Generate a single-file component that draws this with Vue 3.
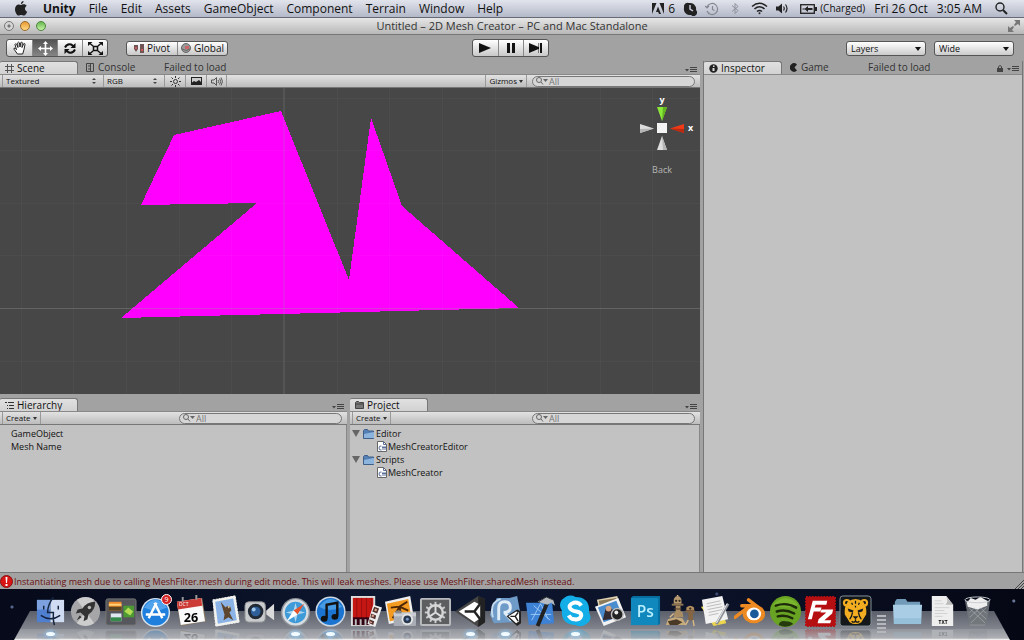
<script setup>
import { ref } from 'vue'

const menus = ['File', 'Edit', 'Assets', 'GameObject', 'Component', 'Terrain', 'Window', 'Help']
const objects = ['GameObject', 'Mesh Name']
const folders = [
  { name: 'Editor', files: ['MeshCreatorEditor'] },
  { name: 'Scripts', files: ['MeshCreator'] }
]

const gridX = [21, 73, 126, 179, 231, 337, 389, 442, 495, 547, 600, 652]
const gridY = [98, 150, 203, 255, 361]
const teeth = [0, 30, 60, 90, 120, 150, 180, 210, 240, 270, 300, 330]

const sceneSearch = ref('')
const hierarchySearch = ref('')
const projectSearch = ref('')
</script>

<template>
  <div class="desktop">
    <header class="menubar">
      <nav class="menus">
        <button class="menu apple" aria-label="Apple">
          <svg width="14" height="15" viewBox="0 0 14 15">
            <path fill="#222" d="M9.6 0c.1 1.500-1.200 3-2.700 3C6.700 1.600 8.100.2 9.600 0zM7 3.900c.8 0 1.600-.7 2.900-.7 1.100 0 2.200.6 2.800 1.500-2.500 1.500-2.100 4.900.5 6-.6 1.600-1.900 3.800-3.300 3.800-1.100 0-1.400-.6-2.700-.6s-1.700.6-2.700.6C2.900 14.500 1 11.200 1 8.200c0-3 1.900-4.800 3.700-4.800 1 0 1.700.5 2.300.5z" />
          </svg>
        </button>
        <button class="menu strong">Unity</button>
        <button v-for="menu in menus" :key="menu" class="menu">{{ menu }}</button>
      </nav>
      <div class="extras">
        <svg width="12" height="11" viewBox="0 0 12 11"><path fill="#222" d="M0 0h4.500L0 11zM7.500 0H12v11zM6 3.500 9 11H7L6.200 9H4z" /></svg>
        <span class="six">6</span>
        <svg class="gap-m" width="14" height="14" viewBox="0 0 14 14"><path fill="#222" d="M1 4a3.500 3.500 0 0 1 5-3 6 6 0 0 1 7 7 3.500 3.500 0 0 1-5 5A6 6 0 0 1 1 6z" /><path d="M7 3v4l3 2" fill="none" stroke="#ccd" stroke-width="1.500" /></svg>
        <svg class="gap-m" width="14" height="14" viewBox="0 0 14 14" fill="none" stroke="#85878f" stroke-width="1.200"><path d="M2 5a5.500 5.500 0 1 1 0 4M0 4l2 2 2-2M7.500 4v3.500l2 1" /></svg>
        <svg class="gap-l" width="8" height="13" viewBox="0 0 8 13" fill="none" stroke="#8d9099"><path d="m1 3.500 6 5-3 3v-10l3 3-6 5" /></svg>
        <svg class="gap-l" width="17" height="13" viewBox="0 0 17 13" fill="none" stroke="#222" stroke-width="1.600"><path d="M1 4.500q7.500-6.500 15 0M3.500 7q5-4.500 10 0M6 9.500q2.500-2 5 0" /><circle cx="8.500" cy="11.300" r="1" fill="#222" stroke="none" /></svg>
        <svg class="gap-m" width="12" height="11" viewBox="0 0 12 11"><path fill="#222" d="M0 3.500h2.500L6 .5v10L2.500 7.500H0z" /><path d="M7.500 3.500q1.500 2 0 4M9.500 1.500q3 4 0 8" fill="none" stroke="#222" stroke-width="1.200" /></svg>
        <svg class="gap-l" width="17" height="10" viewBox="0 0 17 10"><rect x=".7" y=".7" width="13.600" height="8.600" fill="none" stroke="#222" stroke-width="1.300" /><path fill="#222" d="M15 3h2v4h-2zM2.500 4.500H5l3-2.500v2h4.500v2H8v2L5 5.500H2.500z" /></svg>
        <span class="charged">(Charged)</span>
        <span class="clock">Fri 26 Oct</span>
        <span class="clock">3:05 AM</span>
        <button class="menu spotlight" aria-label="Spotlight">
          <svg width="13" height="13" viewBox="0 0 13 13" fill="none" stroke="#222"><circle cx="5" cy="5" r="4" stroke-width="1.400" /><path d="m8 8 4 4" stroke-width="2" /></svg>
        </button>
      </div>
    </header>

    <div class="window">
      <div class="titlebar">
        <div class="lights">
          <button class="light close" aria-label="Close"></button>
          <button class="light minimise" aria-label="Minimise"></button>
          <button class="light zoom" aria-label="Zoom"></button>
        </div>
        <h1>Untitled – 2D Mesh Creator – PC and Mac Standalone</h1>
        <button class="fullscreen" aria-label="Full screen">
          <svg width="12" height="12" viewBox="0 0 12 12"><path fill="#777" d="M6 0h6v6l-2-2-3 2-1-1 2-3zM0 6l2 2 3-2 1 1-2 3 2 2H0z" /></svg>
        </button>
      </div>

      <div class="toolbar">
        <div class="tools">
          <div class="group">
            <button class="tool" aria-label="Hand">
              <svg width="14" height="14" viewBox="0 0 14 14"><path d="M4.500 13 1 8.200q-.5-1.400 1-1l1.500 1.500L2 3.500q.4-1.400 1.600-.3L5 6.500 4.700 1.800q1-1.400 1.700 0L7 6l.8-4.500q1.200-1 1.500.4L9 6.500l1.700-3.800q1.400-.6 1.300.8L11 8.500 9.700 13z" fill="#fff" stroke="#222" /></svg>
            </button>
            <button class="tool selected" aria-label="Move">
              <svg width="15" height="15" viewBox="0 0 15 15"><path fill="#fff" d="M7.500 0 10 3H8.300v3.700H12V5l3 2.500L12 10V8.300H8.300V12H10l-2.500 3L5 12h1.700V8.300H3V10L0 7.500 3 5v1.700h3.700V3H5z" /></svg>
            </button>
            <button class="tool" aria-label="Rotate">
              <svg width="14" height="13" viewBox="0 0 14 13"><path d="M2 5.500Q4 1.500 8 2.500l2.500 1.700M12 7.500q-2 4-6 3L3.500 8.800" fill="none" stroke="#111" stroke-width="2" /><path fill="#111" d="M12.500 1v5h-5zM1.500 12V7h5z" /></svg>
            </button>
            <button class="tool" aria-label="Scale">
              <svg width="15" height="13" viewBox="0 0 15 13"><path d="M5.500 4.500h4v4h-4zM2 1.500 5 4m5 5 3 2.500m0-10L10 4M5 9l-3 2.500" fill="none" stroke="#111" stroke-width="1.500" /><path fill="#111" d="M0 0h4.500L0 4zM15 0v4L10.500 0zM0 13V9l4.500 4zM15 13h-4.500L15 9z" /></svg>
            </button>
          </div>
          <div class="group">
            <button class="mode"><svg width="10" height="9" viewBox="0 0 10 9"><path fill="#6f5555" d="M0 1h4v4L2 8 0 5zM6 0h4v9H6z" /><path fill="#c55" d="M1 3h2v2H1zM7 5h2v2H7z" /></svg>Pivot</button>
            <button class="mode"><svg width="10" height="10" viewBox="0 0 10 10"><circle cx="5" cy="5" r="4.500" fill="#999" stroke="#666" /><path fill="#c66" d="M4 3h4v3H4z" /><path d="M1 6q4 3 8 0" fill="none" stroke="#666" /></svg>Global</button>
          </div>
        </div>
        <div class="group">
          <button class="tool" aria-label="Play"><svg width="12" height="12" viewBox="0 0 12 12"><path fill="#111" d="M0 1v10l12-5z" /></svg></button>
          <button class="tool" aria-label="Pause"><svg width="10" height="12" viewBox="0 0 10 12"><path fill="#111" d="M1 1h3v10H1zM6 1h3v10H6z" /></svg></button>
          <button class="tool" aria-label="Step"><svg width="13" height="12" viewBox="0 0 13 12"><path fill="#111" d="M0 1v10l9.500-4v4H13V1H9.500v4z" /><path stroke="#ddd" d="M10.500 1v10" /></svg></button>
        </div>
        <div class="dropdowns">
          <span class="pick"><select class="popup" aria-label="Layers"><option>Layers</option></select></span>
          <span class="pick"><select class="popup" aria-label="Layout"><option>Wide</option></select></span>
        </div>
      </div>

      <main class="workspace">
        <div class="left">
          <section class="panel scene">
            <div class="tabs">
              <button class="tab active"><svg width="9" height="9" viewBox="0 0 9 9"><path d="M2.500 0v9M6.500 0v9M0 2.500h9M0 6.500h9" stroke="#555" /></svg>Scene</button>
              <button class="tab"><svg width="9" height="9" viewBox="0 0 9 9"><path d="M.5.5h7v8h-7zM2 3h3M2 6h3M4.500 1v7" fill="none" stroke="#444" /></svg>Console</button>
              <button class="tab">Failed to load</button>
              <button class="options" aria-label="Scene options"><svg width="12" height="6" viewBox="0 0 12 6"><path fill="#444" d="M0 2h4L2 4.500zM5 0h7v1H5zM5 2h7v1H5zM5 4h7v1H5z" /></svg></button>
            </div>
            <div class="strip">
              <span class="pick stepper"><select class="flat wide" aria-label="Draw mode"><option>Textured</option></select></span>
              <span class="pick stepper"><select class="flat" aria-label="Render mode"><option>RGB</option></select></span>
              <button class="toggle" aria-label="Lighting"><svg width="11" height="11" viewBox="0 0 11 11" fill="none" stroke="#333"><circle cx="5.500" cy="5.500" r="2" /><path d="M5.500 0v2M5.500 9v2M0 5.500h2M9 5.500h2M1.500 1.500 3 3m5 5 1.500 1.500m0-8L8 3M3 8 1.500 9.500" /></svg></button>
              <button class="toggle" aria-label="Overlays"><svg width="11" height="8" viewBox="0 0 11 8"><path fill="#222" d="M0 0h11v8H0z" /><path fill="#ccc" d="M1 5.500 3 4l2 1 3-2 2 2V1H1z" /></svg></button>
              <button class="toggle last" aria-label="Audio"><svg width="12" height="9" viewBox="0 0 12 9" fill="none" stroke="#555"><path d="M.5 3H3l2.500-2.500v8L3 6H.5zM7 3q1.500 1.500 0 3M8.500 1.500q2.500 3 0 6M10 .5q3 4 0 8" /></svg></button>
              <span class="spacer"></span>
              <button class="create gizmos">Gizmos <i class="caret"></i></button>
              <label class="search">
                <svg width="12" height="8" viewBox="0 0 12 8"><circle cx="3" cy="3" r="2.500" fill="none" stroke="#666" /><path d="m5 5 2 2.500" stroke="#666" /><path fill="#666" d="M7 2h5L9.500 5z" /></svg>
                <input v-model="sceneSearch" type="text" placeholder="All" aria-label="Search scene">
              </label>
            </div>
            <div class="viewport">
              <svg class="canvas" viewBox="0 88 700 306" preserveAspectRatio="xMidYMid slice">
                <polygon points="174,135 281,111 349,280 371,118 402,206 519,308 121,318 257,203 141,205" fill="#f0f" shape-rendering="crispEdges" />
                <g stroke="#fff" stroke-opacity=".03">
                  <path v-for="x in gridX" :key="'x' + x" :d="`M${x}.5 88v306`" />
                  <path v-for="y in gridY" :key="'y' + y" :d="`M0 ${y}.5h700`" />
                </g>
                <path d="M284 88v306M0 308.500h700" stroke="#999" stroke-opacity=".35" />
              </svg>
              <div class="gizmo">
                <span class="axis">y</span>
                <svg width="44" height="46" viewBox="0 0 44 46">
                  <path fill="#8be83a" d="M17 1h10l-5 14z" /><path fill="#62b51e" d="M23 1h4l-5 14z" />
                  <path fill="#ddd" d="M0 18v9l14-4.500z" /><path fill="#b5b5b5" d="M0 23v4l14-4.500z" />
                  <path fill="#f03a18" d="M44 18v9l-14-4.500z" /><path fill="#b92a10" d="M44 23v4l-14-4.500z" />
                  <path fill="#ddd" d="M17 44h10l-5-14z" /><path fill="#b5b5b5" d="M23 44h4l-5-14z" />
                  <path fill="#f4f4f4" d="M17 17h10v10H17z" />
                </svg>
                <span class="axis axis-x">x</span>
                <span class="view">Back</span>
              </div>
            </div>
          </section>

          <div class="bottom">
            <section class="panel">
              <div class="tabs">
                <button class="tab active"><svg width="9" height="9" viewBox="0 0 9 9"><path d="M0 1.500h2M3 1.500h6M2 4.500h1M4 4.500h5M2 7.500h1M4 7.500h5" stroke="#333" /></svg>Hierarchy</button>
                <button class="options" aria-label="Hierarchy options"><svg width="12" height="6" viewBox="0 0 12 6"><path fill="#444" d="M0 2h4L2 4.500zM5 0h7v1H5zM5 2h7v1H5zM5 4h7v1H5z" /></svg></button>
              </div>
              <div class="strip">
                <button class="create">Create <i class="caret"></i></button>
                <span class="spacer"></span>
                <label class="search">
                  <svg width="12" height="8" viewBox="0 0 12 8"><circle cx="3" cy="3" r="2.500" fill="none" stroke="#666" /><path d="m5 5 2 2.500" stroke="#666" /><path fill="#666" d="M7 2h5L9.500 5z" /></svg>
                  <input v-model="hierarchySearch" type="text" placeholder="All" aria-label="Search hierarchy">
                </label>
              </div>
              <ul class="list objects">
                <li v-for="object in objects" :key="object">{{ object }}</li>
              </ul>
            </section>

            <section class="panel">
              <div class="tabs">
                <button class="tab active"><svg width="9" height="8" viewBox="0 0 9 8"><path d="M.5 7.500v-6l1-1h2l1 1h4v6zM.5 3h8" fill="#777" stroke="#444" /></svg>Project</button>
                <button class="options" aria-label="Project options"><svg width="12" height="6" viewBox="0 0 12 6"><path fill="#444" d="M0 2h4L2 4.500zM5 0h7v1H5zM5 2h7v1H5zM5 4h7v1H5z" /></svg></button>
              </div>
              <div class="strip">
                <button class="create">Create <i class="caret"></i></button>
                <span class="spacer"></span>
                <label class="search">
                  <svg width="12" height="8" viewBox="0 0 12 8"><circle cx="3" cy="3" r="2.500" fill="none" stroke="#666" /><path d="m5 5 2 2.500" stroke="#666" /><path fill="#666" d="M7 2h5L9.500 5z" /></svg>
                  <input v-model="projectSearch" type="text" placeholder="All" aria-label="Search project">
                </label>
              </div>
              <ul class="list">
                <template v-for="folder in folders" :key="folder.name">
                  <li>
                    <svg class="arrow" width="8" height="7" viewBox="0 0 8 7"><path fill="#666" d="M0 0h8L4 7z" /></svg>
                    <svg width="12" height="10" viewBox="0 0 12 10"><path d="M.5 9.500v-8l1-1h3l1 1.500h5v7.500z" fill="#5580b5" stroke="#3f5f88" /><path d="M1 9V5l10-2v6z" fill="#8db4dd" /></svg>
                    {{ folder.name }}
                  </li>
                  <li v-for="file in folder.files" :key="file" class="file">
                    <svg width="10" height="11" viewBox="0 0 10 11"><path d="M.5.5h6l3 3v7h-9z" fill="#fff" stroke="#666" /><path d="M6.500.5v3h3M4.500 5q-2.500-.5-2.500 2t2.500 2M6 5v4M8 5v4M5 6.500h4" fill="none" stroke="#5a6f9a" /></svg>
                    {{ file }}
                  </li>
                </template>
              </ul>
            </section>
          </div>
        </div>

        <section class="panel inspector">
          <div class="tabs">
            <button class="tab active"><svg width="9" height="9" viewBox="0 0 9 9"><circle cx="4.500" cy="4.500" r="4.200" fill="#222" /><path fill="#ddd" d="M4 1.500h1.500V3H4zM3.500 4h2v3h-2z" /></svg>Inspector</button>
            <button class="tab"><svg width="8" height="9" viewBox="0 0 8 9"><path fill="#222" d="M7 1.500 4.500 4.500 7 7.500A4.200 4.200 0 1 1 7 1.500z" /></svg>Game</button>
            <button class="tab">Failed to load</button>
            <button class="options" aria-label="Inspector options"><svg width="22" height="9" viewBox="0 0 22 9"><path fill="#444" d="M0 4h6v4H0zM10 4h4l-2 2.500zM15 2h7v1h-7zM15 4h7v1h-7zM15 6h7v1h-7z" /><path d="M1.500 4V2.500q1.500-2 3 0V4" fill="none" stroke="#444" /></svg></button>
          </div>
          <div class="blank"></div>
        </section>
      </main>

      <footer class="status">
        <svg width="13" height="13" viewBox="0 0 13 13"><circle cx="6.500" cy="6.500" r="6" fill="#d91515" stroke="#8c1010" /><path fill="#fff" d="M5.500 2h2L7 8H6zM5.500 9h2v2h-2z" /></svg>
        <span>Instantiating mesh due to calling MeshFilter.mesh during edit mode. This will leak meshes. Please use MeshFilter.sharedMesh instead.</span>
        <svg class="grip" width="10" height="10" viewBox="0 0 10 10"><path d="m1 10 9-9M4 10l6-6M7 10l3-3" stroke="#444" /></svg>
      </footer>
    </div>

    <nav class="dock">
      <button class="app running" aria-label="Finder">
        <svg viewBox="0 0 34 34"><path fill="#4f7fd0" d="M3 5h14v23H3z" /><path fill="#a9c4ec" d="M3 5h14v10H3z" opacity=".5" /><path fill="#cfdcf2" d="M17 5h14v23H17z" /><path d="M20 2q-6 8-6 16h6q-.5 8 1 13M7 21q10 7 20 0M10 11v4M25 11v4" fill="none" stroke="#15243f" stroke-width="1.500" /></svg>
      </button>
      <button class="app" aria-label="Launchpad">
        <svg viewBox="0 0 34 34"><circle cx="17" cy="17" r="15" fill="#a6a6a8" /><path fill="#dedede" d="M17 17 8 5q9-6 18 0zM17 17l-9 12q9 6 18 0z" opacity=".7" /><path fill="#333" d="M27 7q-9 0-13 7l-5 1-2 4 5-1 4 4-1 5 4-2 1-5q7-4 7-13zM11 21l2 2-5 3z" /><circle cx="21" cy="13" r="1.800" fill="#bbb" /></svg>
      </button>
      <button class="app" aria-label="Mission Control">
        <svg viewBox="0 0 34 34"><rect x="2" y="4" width="31" height="27" rx="2" fill="#55575c" stroke="#777" /><path fill="#f08a28" d="M5 7h13v9H5z" /><path fill="#fbd27a" d="M5 9h13v2H5z" /><path fill="#542" d="M5 12h13v4H5z" /><path fill="#4b9a34" d="M20 11h11v12H20z" /><path fill="#b4dd54" d="m21 17 4-4 5 4-3 4z" /><path fill="#dfe9ef" d="M7 19h11v8H7z" /><path fill="#368a4a" d="M7 23h11v4H7z" /></svg>
      </button>
      <button class="app" aria-label="App Store">
        <svg viewBox="0 0 34 34"><circle cx="17" cy="18" r="15" fill="#d8e4ee" /><circle cx="17" cy="18" r="13.500" fill="#1e7fdc" /><path fill="#6fb9f5" d="M5 13q12-16 24 0-12 6-24 0z" opacity=".6" /><path d="M18 8 10 24M16 8l8 16M7 20h20" fill="none" stroke="#fff" stroke-width="2.500" /></svg>
        <span class="badge">9</span>
      </button>
      <button class="app" aria-label="Calendar">
        <svg viewBox="0 0 34 34"><path fill="#8b7860" d="m3 9 26-6 4 24-26 5z" /><path fill="#fafafa" d="m3 7 25-4 4 24-25 4z" /><path fill="#cc3b35" d="m3 7 25-4 1 8-25 4z" /><path d="M9 2v5M23 0v5" stroke="#999" stroke-width="2" /><text x="10" y="28" class="day">26</text><text x="5" y="11" class="month">OCT</text></svg>
      </button>
      <button class="app" aria-label="Mail">
        <svg viewBox="0 0 34 34"><path d="m5 6 21-4 4 25-22 4z" fill="#8bb3e6" stroke="#f2f2ee" stroke-width="2.500" /><path d="m4 5 23-4 4 27-24 4z" fill="none" stroke="#f2f2ee" stroke-dasharray="2 1" /><path fill="#5e452d" d="m12 7 5 6 2-2 3 1 1 4-2 2 4 8-5-3-5 3 1-6z" /><path fill="#d9c69c" d="m19 11 3 1-2 2z" /></svg>
      </button>
      <button class="app" aria-label="FaceTime">
        <svg viewBox="0 0 34 34"><rect x="1" y="7" width="21" height="21" rx="4" fill="#c9cbcd" stroke="#8a8c8e" /><path fill="#dadada" d="M23 16 31 9v17l-8-6z" /><circle cx="12" cy="17" r="8" fill="#222a36" /><circle cx="12" cy="17" r="5" fill="#2f5f98" /><circle cx="10" cy="15" r="2" fill="#9fc8ef" /></svg>
      </button>
      <button class="app running" aria-label="Safari">
        <svg viewBox="0 0 34 34"><circle cx="17" cy="18" r="15" fill="#8d9298" /><circle cx="17" cy="18" r="13.500" fill="#d7dde2" /><circle cx="17" cy="18" r="11" fill="#3f9ad8" /><path fill="#dff1fb" d="m17 8 2 8 8 2-8 2-2 8-2-8-8-2 8-2z" opacity=".7" /><path fill="#e5542c" d="m26 9-7 11-4-4z" /><path fill="#fff" d="m8 27 7-11 4 4z" /></svg>
      </button>
      <button class="app running" aria-label="iTunes">
        <svg viewBox="0 0 34 34"><circle cx="17" cy="17" r="15.500" fill="#cdd8e2" /><circle cx="17" cy="17" r="14" fill="#1b74cf" /><path fill="#72c0f8" d="M5 12q12-16 24 0-12 7-24 0z" opacity=".5" /><path d="M13 24V10l11-2v14" fill="none" stroke="#111" stroke-width="2.500" /><ellipse cx="10.500" cy="24.500" rx="3.500" ry="3" fill="#111" /><ellipse cx="21.500" cy="22.500" rx="3.500" ry="3" fill="#111" /></svg>
      </button>
      <button class="app" aria-label="Photo Booth">
        <svg viewBox="0 0 34 34"><path fill="#ddd" d="M2 1h25v31H2z" /><path fill="#c41713" d="M4 3h21v21H4z" /><path d="M8 3v21M13 3v21M18 3v21M23 3v21" stroke="#9c0f0f" /><path fill="#301" d="M4 23h18v8H4z" /><path d="M7 31v-6M12 31v-6M17 31v-6" stroke="#bbb" stroke-width="2" /><path fill="#eee" d="m25 10 9 3-7 20-8-3z" /><path fill="#533" d="m26 12 5 2-2 5-5-2zM23 19l5 2-1 4-5-2zM21 25l5 2-1 4-4-2z" /><path fill="#d9a98c" d="m27 14 2 1-1 2-2-1zM24 20l2 1-1 2-2-1zM22 27l2 1-1 1-2-1z" /></svg>
      </button>
      <button class="app" aria-label="iPhoto">
        <svg viewBox="0 0 34 34"><path fill="#eee" d="m1 7 26-6 4 24-26 5z" /><path fill="#f39a21" d="m3 9 22-5 3 19-22 4z" /><path d="m9 24 7-12-9 1m9-1 8-5m-8 5 9 4m-9-4 2 12" stroke="#4a2508" stroke-width="2" fill="none" /><rect x="10" y="18" width="23" height="14" rx="1" fill="#a8adb5" /><path fill="#c9cdd3" d="M10 18h23v4H10z" /><circle cx="24" cy="25" r="6" fill="#e5e5e5" /><circle cx="24" cy="25" r="4" fill="#26374f" /><circle cx="24" cy="25" r="1.500" fill="#7b97c0" /><path fill="#888" d="M12 16h6v3h-6z" /></svg>
      </button>
      <button class="app" aria-label="System Preferences">
        <svg viewBox="0 0 34 34"><rect x="2" y="4" width="30" height="27" rx="1" fill="#5c5e60" stroke="#b9babd" stroke-width="2" /><g fill="#ccc"><path v-for="a in teeth" :key="a" d="M16 7h2v4h-2z" :transform="`rotate(${a} 17 18)`" /></g><circle cx="17" cy="18" r="7.500" fill="none" stroke="#d5d5d5" stroke-width="2.500" /><path d="M17 18v-7M17 18l-6 4M17 18l6 4" stroke="#ddd" stroke-width="2" /></svg>
      </button>
      <button class="app running" aria-label="Unity">
        <svg viewBox="0 0 34 34"><path fill="#464646" d="M1 17 25 1l7 3v24l-7 5z" /><path fill="#222" d="m25 1 7 3v24l-7 5z" /><path fill="#fff" d="m5 17 16-10 6 3v14l-6 4z" /><path d="M11 17h10l6-8M21 17l6 8" fill="none" stroke="#222" stroke-width="2.500" /></svg>
      </button>
      <button class="app running" aria-label="MonoDevelop">
        <svg viewBox="0 0 34 34"><path fill="#6f9bc8" d="M8 3h13l8-2 3 16-7 11-20 1-4-9z" /><path d="M10 26V14q0-7 6-7t6 6q0 5-7 5m1 0 7 8" fill="none" stroke="#e1edf7" stroke-width="3" /><path d="M4 23Q0 8 12 4" fill="none" stroke="#c5dbef" stroke-width="2" /><path fill="#222" d="m18 22 11-7 4 2v12l-4 3z" /><path fill="#fff" d="m20 22 8-5 3 1v9l-3 2z" /><path d="M22 22h5l3-4m-3 4 3 5" fill="none" stroke="#222" stroke-width="1.500" /></svg>
      </button>
      <button class="app" aria-label="Xcode">
        <svg viewBox="0 0 34 34"><path fill="#3e82d6" d="m2 8 27 0 2 21-26 2z" /><path d="m8 26 9-17 8 16M7 20h21M10 11l17 15" fill="none" stroke="#9bc6f5" /><path d="m14 32 10-24" stroke="#222" stroke-width="4" /><path fill="#b5bac0" d="m14 7 9-5 7 3 2 6-4-3-4 2z" /><path d="m15 7 8-5 7 3" fill="none" stroke="#333" /></svg>
      </button>
      <button class="app running" aria-label="Skype">
        <svg viewBox="0 0 34 34"><path fill="#13aee8" d="M3 5q7-7 14-3 15 0 14 16 4 8-3 12-5 4-11 1Q2 30 3 16-1 10 3 5z" /><path d="M23 11q-3-4-8-3-5 2-4 5 1 3 7 4 5 1 5 4-1 5-7 4-4 0-6-4" fill="none" stroke="#fff" stroke-width="4" /></svg>
      </button>
      <button class="app" aria-label="Preview">
        <svg viewBox="0 0 34 34"><path fill="#ddd1b2" d="m3 5 21-4 5 20-21 5z" /><path fill="#8c7a58" d="m5 6 18-3 1 4-18 5z" /><path fill="#f3f3f3" d="m1 12 24-9 8 20-23 9z" /><path fill="#4a8cce" d="m4 13 19-7 6 15-19 7z" /><path fill="#332b32" d="m9 26 3-12 4-2 3 3 5 9z" /><circle cx="15" cy="14" r="3" fill="#d8a582" /><circle cx="24" cy="20" r="6" fill="#222" stroke="#bbb" stroke-width="1.500" /><circle cx="23" cy="18" r="2" fill="#eee" /></svg>
      </button>
      <button class="app" aria-label="Photoshop">
        <svg viewBox="0 0 34 34"><path fill="#076d9e" d="m2 3 2-2h28v29l-2 1z" /><path fill="#1088bd" d="M2 3h28v28H2z" /><text x="8" y="23" class="ps">Ps</text></svg>
      </button>
      <button class="app" aria-label="Machinarium">
        <svg viewBox="0 0 34 34"><path fill="#b59a70" d="M10 5q1-4 4-4t4 4v4h-8z" /><path fill="#8d7350" d="M8 9h12v2H8z" /><path fill="#a98d65" d="M12 11h5v6h-5zM11 17h8l1 6H10z" /><path fill="#c6ab7c" d="m2 31 2-6 7-2 8 1 4 7z" /><path fill="#4b3927" d="M4 27l9-2 6 3-5 3H6zM10 14h8v1h-8z" /><path fill="#b08d5e" d="M23 13q4-4 8 0v3h-8z" /><path fill="#846645" d="M22 16h10v2H22zM25 18h5v8h-5z" /><path d="m25 26-3 5M30 26l1 6M10 19l-4 4M14 1v-1" stroke="#d8b884" stroke-width="1.500" /><circle cx="12.500" cy="6" r="1.200" fill="#382c21" /><circle cx="16" cy="6" r="1.200" fill="#382c21" /><circle cx="27" cy="14" r="1.200" fill="#382c21" /></svg>
      </button>
      <button class="app" aria-label="TextEdit">
        <svg viewBox="0 0 34 34"><path fill="#ebd64e" d="m2 12 20-3 6 20-13 3z" /><path fill="#f2f2f2" d="m3 5 21-4 6 24-23 5z" /><path d="m8 9 14-3M8 12l15-3M9 15l15-3M10 18l14-3M10 21l10-2" stroke="#bbb" /><path d="m30 9-12 21" stroke="#8b8e94" stroke-width="3" /><path d="m29 9-11 20" stroke="#eee" /></svg>
      </button>
      <button class="app" aria-label="Blender">
        <svg viewBox="0 0 34 34"><path d="m15 5 13 10M8 11h15M1 23l13-10" stroke="#ee8a22" stroke-width="3.500" stroke-linecap="round" /><ellipse cx="20.500" cy="19.500" rx="11.500" ry="9.500" fill="#ee8a22" /><ellipse cx="20.500" cy="19.500" rx="7.500" ry="6.500" fill="#fff" /><circle cx="21" cy="19.500" r="4.500" fill="#195a9b" /></svg>
      </button>
      <button class="app" aria-label="Spotify">
        <svg viewBox="0 0 34 34"><circle cx="17" cy="17" r="16" fill="#69a323" /><path fill="#8bc73a" d="M4 10q13-14 26 0-13 6-26 0z" opacity=".5" /><path d="M7 11q11-4 21 2M8 17q9-3 18 2M9 22q8-2 15 2" fill="none" stroke="#1d2b0b" stroke-width="2.500" stroke-linecap="round" /><path fill="#253b0e" d="M10 31q1-5 7-4 6 0 8 3-7 5-15 1z" /></svg>
      </button>
      <button class="app" aria-label="FileZilla">
        <svg viewBox="0 0 34 34"><path d="M2 2h30v30H2z" fill="#b60f12" stroke="#b60f12" stroke-width="2" stroke-dasharray="2 1" /><path fill="#fff" d="M9 6h15l-1 4H12l-1 3h7l-1 4h-7l-2 8H4zM18 15h12l-1 4-8 7h7l-1 3H14l1-4 8-7h-6z" /></svg>
      </button>
      <button class="app" aria-label="Cheetah3D">
        <svg viewBox="0 0 34 34"><rect x="1" y="1" width="32" height="31" rx="3" fill="#15181a" stroke="#86959c" /><circle cx="8" cy="8" r="4" fill="#f2ae20" /><circle cx="26" cy="8" r="4" fill="#f2ae20" /><circle cx="8" cy="8" r="1.800" fill="#15181a" /><circle cx="26" cy="8" r="1.800" fill="#15181a" /><path fill="#f2ae20" d="M9 7q8-6 16 0 4 6 3 13-2 3-5 8-6 4-12 0-3-5-5-8Q5 13 9 7z" /><path fill="#15181a" d="m9 14 6 2-1 2-4-1zM25 14l-6 2 1 2 4-1zM14 22h6l-3 3z" /><path d="M14 18q-1 5-3 7M20 18q1 5 3 7M17 25v2q-2 2-4 0m4 0q2 2 4 0M13 8l1 2M21 8l-1 2M17 6v3M17 11v2" fill="none" stroke="#15181a" stroke-width="1.300" /></svg>
      </button>
      <span class="divider"></span>
      <button class="app" aria-label="Documents">
        <svg viewBox="0 0 34 34"><path fill="#709ab7" d="M4 7 6 4h9l2 3h13v22H3z" /><path fill="#a9cde5" d="M2 10h30l-1 20H3z" /><path fill="#8bb7d2" d="M3 24h28v6H3z" opacity=".6" /></svg>
      </button>
      <button class="app" aria-label="Text file">
        <svg viewBox="0 0 34 34"><path fill="#eee" d="M6 1h15l7 9v22H6z" /><path fill="#bbb" d="M20 1q4 5 0 9h8z" /><path d="M9 6h7M9 9h9M9 13h15M9 16h10M9 19h13M9 22h8" stroke="#d0d0d0" /><text x="13" y="30" class="txt">TXT</text></svg>
      </button>
      <button class="app" aria-label="Trash">
        <svg viewBox="0 0 34 34"><path fill="#73787d" d="M4 6h26l-4 26H9z" opacity=".85" /><path fill="#eee" d="m6 8 4-5 5 2 5-3 7 4v5l-10 4-10-3z" /><path d="m8 13 17 16M13 13l13 12M20 13l6 6M26 13 10 29M20 13 9 23M14 13l-5 5M9 31h16" stroke="#c3c8cd" stroke-opacity=".45" /><ellipse cx="17" cy="5" rx="13" ry="3" fill="none" stroke="#c6cbd0" /></svg>
      </button>
    </nav>
  </div>
</template>

<style>
body {
  margin: 0;
  background: #050817;
}
</style>

<style scoped>
.desktop {
  display: flex;
  flex-direction: column;
  min-height: 100vh;
  font-family: "Open Sans", "Noto Sans", sans-serif;
  font-size: 9px;
  line-height: 13px;
  color: #111;
  background: #070b1c;
}

button,
input,
select {
  font: inherit;
  color: inherit;
  margin: 0;
  padding: 0;
  border: 0;
  background: none;
  border-radius: 0;
}

select {
  appearance: none;
}

svg {
  display: block;
  flex: none;
}

.menubar {
  display: flex;
  justify-content: space-between;
  height: 17px;
  padding: 0 16px 0 14px;
  background: linear-gradient(#e2e4ec, #b4b9c9);
  border-bottom: 1px solid #666a75;
  font-size: 12px;
  line-height: 17px;
}

.menus,
.extras {
  display: flex;
  align-items: center;
}

.menus {
  gap: 13px;
}

.strong {
  margin-left: 2px;
  font-weight: 700;
}

.six {
  margin-left: 4px;
}

.gap-m {
  margin-left: 8px;
}

.gap-l {
  margin-left: 12px;
}

.charged {
  margin-left: 3px;
  font-size: 10px;
}

.clock {
  margin-left: 9px;
}

.spotlight {
  margin-left: 13px;
}

.window {
  flex: 1;
  display: flex;
  flex-direction: column;
  background: #a2a2a2;
}

.titlebar {
  display: grid;
  grid-template-columns: 1fr auto 1fr;
  align-items: center;
  height: 16px;
  padding: 0 4px;
  background: linear-gradient(#e6e6e6, #b8b8b8);
  border-bottom: 1px solid #777;
}

.titlebar h1 {
  margin: 0;
  font-size: 11px;
  font-weight: 400;
  line-height: 16px;
  color: #333;
}

.lights {
  display: flex;
  gap: 6px;
}

.light {
  width: 10px;
  height: 10px;
  border: 1px solid #777;
  border-radius: 50%;
}

.close {
  background: radial-gradient(circle, #777 20%, #d5d5d5 35%);
}

.minimise {
  border-color: #9c6a27;
  background: linear-gradient(#e89b36, #ffd982);
}

.zoom {
  border-color: #4c873d;
  background: linear-gradient(#67b850, #c5f2a5);
}

.fullscreen {
  justify-self: end;
}

.toolbar {
  display: grid;
  grid-template-columns: 1fr auto 1fr;
  align-items: center;
  height: 26px;
  padding: 0 10px 0 6px;
}

.tools {
  display: flex;
  align-items: center;
  gap: 18px;
}

.group {
  display: flex;
  border: 1px solid #555;
  border-radius: 3px;
  background: linear-gradient(#fff, #c8c8c8);
  overflow: hidden;
}

.group button {
  display: flex;
  align-items: center;
  justify-content: center;
  gap: 3px;
}

.group button + button {
  border-left: 1px solid #888;
}

.tool {
  width: 25px;
  height: 16px;
}

.selected {
  background: linear-gradient(#555, #858585);
}

.mode {
  width: 50px;
  height: 13px;
  font-size: 10px;
}

.dropdowns {
  display: flex;
  justify-content: flex-end;
  gap: 8px;
}

.pick {
  position: relative;
  display: flex;
}

.pick::after {
  content: "";
  position: absolute;
  top: 6px;
  right: 5px;
  border: 3px solid transparent;
  border-top: 4px solid #111;
  border-bottom: 0;
  pointer-events: none;
}

.popup {
  width: 80px;
  height: 15px;
  padding: 0 4px;
  border: 1px solid #555;
  border-radius: 3px;
  background: linear-gradient(#fff, #cbcbcb);
}

.workspace {
  flex: 1;
  display: grid;
  grid-template-columns: 700fr 320fr;
  gap: 3px;
  padding-right: 1px;
}

.left {
  display: grid;
  grid-template-rows: 333fr 174fr;
  gap: 4px;
  min-width: 0;
}

.bottom {
  display: grid;
  grid-template-columns: 347fr 350fr;
  gap: 3px;
}

.panel {
  display: flex;
  flex-direction: column;
  min-width: 0;
}

.tabs {
  display: flex;
  height: 13px;
}

.tab {
  display: flex;
  align-items: center;
  gap: 3px;
  width: 78px;
  padding: 0 8px;
  font-size: 10px;
  line-height: 13px;
  white-space: nowrap;
  color: #333;
}

.tab.active {
  padding-left: 5px;
  color: #111;
  background: linear-gradient(#e0e0e0, #d2d2d2);
  border-top: 1px solid #777;
  border-right: 1px solid #777;
  border-radius: 2px 3px 0 0;
}

.options {
  align-self: flex-end;
  margin-left: auto;
  padding: 0 3px 1px;
}

.strip {
  display: flex;
  align-items: center;
  height: 12px;
  padding: 0 5px 0 2px;
  background: linear-gradient(#e2e2e2, #bcbcbc);
  border-top: 1px solid #888;
  border-bottom: 1px solid #777;
}

.strip button,
.strip select {
  height: 12px;
  padding: 0 3px;
  font-size: 8px;
  line-height: 12px;
  border-left: 1px solid #999;
}

.strip .flat {
  width: 61px;
}

.strip .wide {
  width: 101px;
}

.stepper::before {
  content: "";
  position: absolute;
  top: 3px;
  right: 7px;
  border: 2px solid transparent;
  border-bottom: 2px solid #444;
  border-top: 0;
  pointer-events: none;
}

.stepper::after {
  top: 7px;
  right: 7px;
  border-width: 2px 2px 0;
  border-top-color: #444;
}

.toggle {
  display: flex;
  align-items: center;
  justify-content: center;
  width: 21px;
}

.strip .last,
.strip .create {
  border-right: 1px solid #999;
}

.create {
  display: flex;
  align-items: center;
  gap: 2px;
}

.caret {
  border: 2px solid transparent;
  border-top: 3px solid #333;
  border-bottom: 0;
}

.spacer {
  flex: 1;
}

.gizmos {
  margin-right: 5px;
}

.search {
  display: flex;
  align-items: center;
  gap: 1px;
  box-sizing: border-box;
  width: 163px;
  height: 11px;
  padding: 0 3px;
  border: 1px solid #777;
  border-radius: 6px;
  background: #d6d6d6;
}

.search input {
  flex: 1;
  min-width: 0;
  height: 9px;
  font-size: 9px;
  line-height: 9px;
  outline: none;
}

.search input::placeholder {
  color: #777;
}

.viewport {
  flex: 1;
  position: relative;
  min-height: 0;
  background: #474747;
}

.canvas {
  position: absolute;
  width: 100%;
  height: 100%;
}

.gizmo {
  position: absolute;
  top: 6px;
  right: 16px;
  width: 44px;
  display: flex;
  flex-direction: column;
  align-items: center;
  color: #b5b5b5;
}

.axis {
  font-weight: 700;
  line-height: 12px;
  color: #fff;
}

.axis-x {
  position: absolute;
  top: 28px;
  left: 48px;
}

.view {
  margin-top: 11px;
}

.list {
  flex: 1;
  margin: 0;
  padding: 2px 2px 0;
  list-style: none;
  background: #c2c2c2;
  border-right: 1px solid #888;
}

.list li {
  display: flex;
  align-items: center;
  gap: 1px;
  height: 13px;
}

.list.objects {
  padding-left: 11px;
}

.arrow {
  margin-right: 2px;
}

.list .file {
  padding-left: 25px;
}

.inspector {
  border-left: 1px solid #777;
  border-right: 1px solid #777;
}

.blank {
  flex: 1;
  background: #c2c2c2;
  border-top: 1px solid #888;
}

.status {
  display: flex;
  align-items: center;
  gap: 1px;
  height: 16px;
  border-top: 1px solid #777;
  color: #6a1010;
}

.grip {
  align-self: flex-end;
  margin-left: auto;
}

.dock {
  position: relative;
  z-index: 0;
  display: flex;
  justify-content: center;
  height: 46px;
  padding: 5px 0 0 4px;
  overflow: hidden;
  background:
    radial-gradient(circle at 12px 18px, #56658c 0 1px, transparent 2px),
    radial-gradient(circle at 70% 5px, #3d4a70 0 1px, transparent 2px),
    radial-gradient(circle at 99% 12px, #6a7698 0 1px, transparent 2px),
    linear-gradient(90deg, #060a1a, #0d1730 40%, #0b1228 70%, #050714);
}

.dock::before {
  content: "";
  position: absolute;
  z-index: -1;
  inset: 22px 14px 0;
  background: linear-gradient(#5b5f69, #80838c 60%, #94979e 64%, #aeb0b5 94%, #eee 97%);
  clip-path: polygon(16px 0, calc(100% - 16px) 0, 100% 100%, 0 100%);
}

.app {
  position: relative;
  width: 35px;
}

.app svg {
  width: 33px;
  height: 33px;
  margin: 0 auto 11px;
  -webkit-box-reflect: below 0 linear-gradient(transparent 60%, rgba(0, 0, 0, 0.35));
}

.running::after {
  content: "";
  position: absolute;
  left: 13px;
  bottom: 4px;
  width: 9px;
  height: 4px;
  border-radius: 50%;
  background: #f2fbff;
  box-shadow: 0 0 4px 1px #8fc8f5;
}

.badge {
  position: absolute;
  top: 0;
  right: 1px;
  width: 9px;
  height: 9px;
  border: 1px solid #fff;
  border-radius: 50%;
  background: #d32222;
  color: #fff;
  font-size: 7px;
  line-height: 9px;
  text-align: center;
}

.divider {
  align-self: flex-start;
  width: 9px;
  height: 20px;
  margin: 19px 4px 0;
  background: repeating-linear-gradient(transparent 0 2px, #b5b7bd 2px 4px);
}

.day {
  font-size: 13px;
  font-weight: 700;
}

.month {
  font-size: 5px;
  fill: #fff;
}

.ps {
  font-size: 16px;
  font-weight: 600;
  fill: #b9efff;
}

.txt {
  font-size: 5px;
  font-weight: 700;
}
</style>
